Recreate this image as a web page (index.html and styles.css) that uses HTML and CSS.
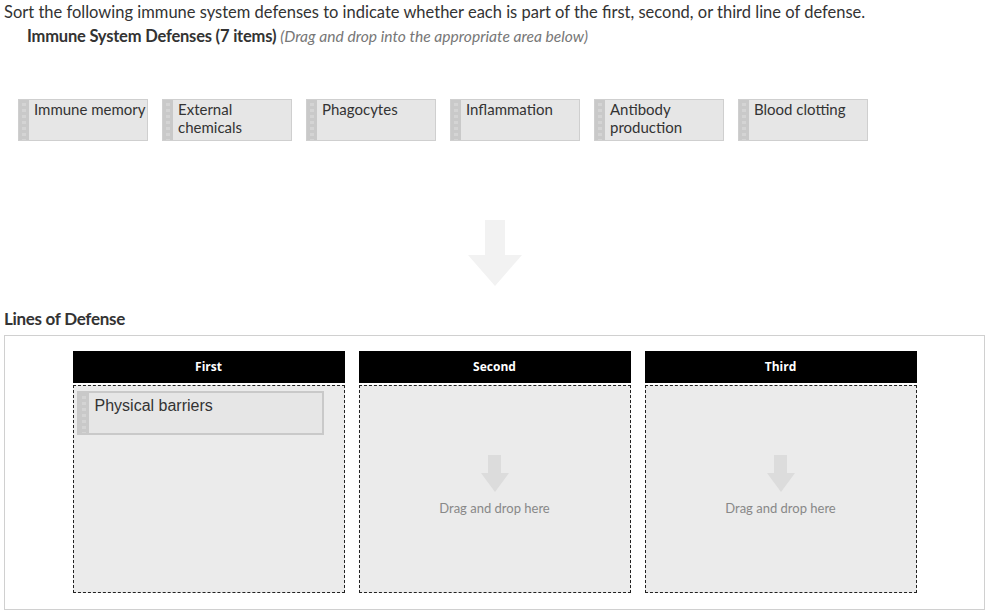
FILE: index.html
```html
<!DOCTYPE html>
<html lang="en">
<head>
    <meta charset="UTF-8">
    <title>Immune System Defenses</title>
    <link rel="stylesheet" href="styles.css">
</head>
<body>
    <div class="question">Sort the following immune system defenses to indicate whether each is part of the first, second, or third line of defense.</div>
    <div class="pool-title"><b>Immune System Defenses (7 items)</b> <i>(Drag and drop into the appropriate area below)</i></div>

    <div class="pool">
        <div class="item"><span class="grip"></span><span class="label">Immune memory</span></div>
        <div class="item"><span class="grip"></span><span class="label">External chemicals</span></div>
        <div class="item"><span class="grip"></span><span class="label">Phagocytes</span></div>
        <div class="item"><span class="grip"></span><span class="label">Inflammation</span></div>
        <div class="item"><span class="grip"></span><span class="label">Antibody production</span></div>
        <div class="item"><span class="grip"></span><span class="label">Blood clotting</span></div>
    </div>

    <div class="big-arrow">
        <svg width="56" height="66" viewBox="0 0 56 66">
            <polygon points="18,0 38,0 38,35 55,35 28,66 1,35 18,35" fill="#f2f2f2"/>
        </svg>
    </div>

    <div class="section-title">Lines of Defense</div>
    <div class="board">
        <div class="column">
            <div class="col-head">First</div>
            <div class="drop">
                <div class="placed"><span class="grip"></span><span class="label">Physical barriers</span></div>
            </div>
        </div>
        <div class="column">
            <div class="col-head">Second</div>
            <div class="drop empty">
                <svg width="28" height="37" viewBox="0 0 28 37">
                    <polygon points="7,0 20,0 20,18 28,18 14,37 0,18 7,18" fill="#dcdcdc"/>
                </svg>
                <span class="hint">Drag and drop here</span>
            </div>
        </div>
        <div class="column">
            <div class="col-head">Third</div>
            <div class="drop empty">
                <svg width="28" height="37" viewBox="0 0 28 37">
                    <polygon points="7,0 20,0 20,18 28,18 14,37 0,18 7,18" fill="#dcdcdc"/>
                </svg>
                <span class="hint">Drag and drop here</span>
            </div>
        </div>
    </div>
</body>
</html>
```

FILE: styles.css
```css
body {
    font-family: Lato, "Open Sans", sans-serif;
    color: #333;
    background-color: #fff;
    margin: 0;
    padding: 2px 4px;
}

.question {
    font-size: 16.5px;
    line-height: 20px;
}

.pool-title {
    font-size: 16.5px;
    line-height: 20px;
    margin: 4px 0 0 23px;
    letter-spacing: -0.2px;
}
.pool-title b {
    color: #333;
}
.pool-title i {
    font-size: 15.6px;
    color: #777;
    letter-spacing: 0;
}

.pool {
    display: flex;
    gap: 14px;
    margin: 53px 0 0 14px;
}

.item {
    display: flex;
    width: 128px;
    height: 40px;
    background-color: #e6e6e6;
    border: 1px solid #cfcfcf;
}

.grip {
    flex: none;
    width: 10px;
    background-color: #c9c9c9;
    background-image: repeating-linear-gradient(180deg, #c9c9c9 0, #c9c9c9 3px, #d4d4d4 3px, #d4d4d4 6px);
    background-size: 4px 100%;
    background-position: 3px 0;
    background-repeat: no-repeat;
}

.label {
    padding: 0 0 0 5px;
    font-size: 15px;
    line-height: 18px;
    color: #333;
}

.big-arrow {
    display: flex;
    justify-content: center;
    margin-top: 79px;
}
.big-arrow svg {
    display: block;
}

.section-title {
    font-size: 17px;
    font-weight: bold;
    line-height: 20px;
    margin-top: 23px;
    letter-spacing: -0.3px;
}

.board {
    display: flex;
    justify-content: center;
    gap: 14px;
    margin-top: 6px;
    padding: 15px 0 16px;
    border: 1px solid #d0d0d0;
}

.column {
    width: 272px;
}

.col-head {
    height: 32px;
    line-height: 32px;
    background-color: #000;
    color: #fff;
    font-size: 12px;
    font-weight: bold;
    text-align: center;
    font-family: "Open Sans", Lato, sans-serif;
}

.drop {
    height: 206px;
    margin-top: 2px;
    background-color: #ebebeb;
    border: 1px dashed #222;
}

.drop.empty {
    display: flex;
    flex-direction: column;
    align-items: center;
    padding-top: 69px;
    height: 137px;
}
.drop.empty svg {
    display: block;
}

.hint {
    margin-top: 8px;
    font-size: 13px;
    color: #888;
}

.placed {
    display: flex;
    width: 243px;
    height: 40px;
    margin: 5px 0 0 3px;
    background-color: #e6e6e6;
    border: 2px solid #c9c9c9;
}
.placed .label {
    font-family: "Liberation Sans", Arial, sans-serif;
    font-size: 16px;
    padding: 4px 0 0 6px;
}
```
